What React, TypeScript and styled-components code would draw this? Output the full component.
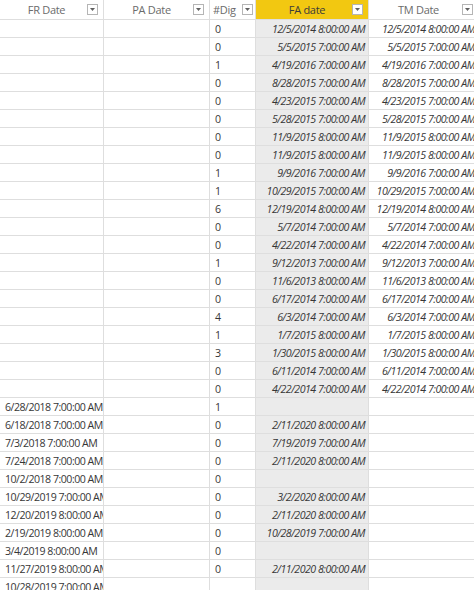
import React from "react";
import styled, { createGlobalStyle } from "styled-components";

const Global = createGlobalStyle`
  html, body { margin: 0; padding: 0; background: #ffffff; overflow: hidden; }
  body { font-family: "Segoe UI", "Open Sans", "Noto Sans", sans-serif; }
`;

const COLS = "104px 106px 46px 113px 110px";

const Table = styled.div`
  display: grid;
  grid-template-columns: ${COLS};
  grid-auto-rows: 18px;
  grid-template-rows: 20px;
  width: 474px;
  overflow: hidden;
  font-size: 10.6px;
  letter-spacing: -0.5px;
  color: #363636;
`;

const HeaderCell = styled.div<{ $active?: boolean; $tight?: boolean }>`
  display: flex;
  align-items: center;
  padding: ${(p) => (p.$tight ? "0 2px 0 3px" : "0 5px 0 6px")};
  background: ${(p) => (p.$active ? "#F2C811" : "#ffffff")};
  border-right: 1px solid #dedede;
  border-bottom: 1px solid #dedede;
  color: ${(p) => (p.$active ? "#3b3b3b" : "#6b6b6b")};
  font-size: 11px;
  letter-spacing: -0.3px;
  overflow: hidden;
  white-space: nowrap;
`;

const HeaderLabel = styled.span<{ $align?: "left" | "center" }>`
  flex: 1;
  text-align: ${(p) => p.$align || "center"};
  overflow: hidden;
`;

const DropBox = styled.span`
  flex: 0 0 auto;
  width: 9px;
  height: 9px;
  border: 1px solid #b5b5b5;
  background: #ffffff;
  display: flex;
  align-items: center;
  justify-content: center;
`;

const Cell = styled.div<{ $shade?: boolean; $right?: boolean; $italic?: boolean }>`
  display: flex;
  align-items: center;
  justify-content: ${(p) => (p.$right ? "flex-end" : "flex-start")};
  padding: ${(p) => (p.$right ? "0 3px 0 2px" : "0 2px 0 5px")};
  background: ${(p) => (p.$shade ? "#ebebeb" : "#ffffff")};
  border-right: 1px solid #dedede;
  border-bottom: 1px solid #dedede;
  font-style: ${(p) => (p.$italic ? "italic" : "normal")};
  white-space: nowrap;
  overflow: hidden;
`;

const Arrow = () => (
  <svg width="5" height="3" viewBox="0 0 5 3">
    <path d="M0 0 H5 L2.5 3 Z" fill="#606060" />
  </svg>
);

type Row = { fr: string; dig: string; fa: string; tm: string };

const top: [string, string][] = [
  ["0", "12/5/2014 8:00:00 AM"],
  ["0", "5/5/2015 7:00:00 AM"],
  ["1", "4/19/2016 7:00:00 AM"],
  ["0", "8/28/2015 7:00:00 AM"],
  ["0", "4/23/2015 7:00:00 AM"],
  ["0", "5/28/2015 7:00:00 AM"],
  ["0", "11/9/2015 8:00:00 AM"],
  ["0", "11/9/2015 8:00:00 AM"],
  ["1", "9/9/2016 7:00:00 AM"],
  ["1", "10/29/2015 7:00:00 AM"],
  ["6", "12/19/2014 8:00:00 AM"],
  ["0", "5/7/2014 7:00:00 AM"],
  ["0", "4/22/2014 7:00:00 AM"],
  ["1", "9/12/2013 7:00:00 AM"],
  ["0", "11/6/2013 8:00:00 AM"],
  ["0", "6/17/2014 7:00:00 AM"],
  ["4", "6/3/2014 7:00:00 AM"],
  ["1", "1/7/2015 8:00:00 AM"],
  ["3", "1/30/2015 8:00:00 AM"],
  ["0", "6/11/2014 7:00:00 AM"],
  ["0", "4/22/2014 7:00:00 AM"],
];

const bottom: Row[] = [
  { fr: "6/28/2018 7:00:00 AM", dig: "1", fa: "", tm: "" },
  { fr: "6/18/2018 7:00:00 AM", dig: "0", fa: "2/11/2020 8:00:00 AM", tm: "" },
  { fr: "7/3/2018 7:00:00 AM", dig: "0", fa: "7/19/2019 7:00:00 AM", tm: "" },
  { fr: "7/24/2018 7:00:00 AM", dig: "0", fa: "2/11/2020 8:00:00 AM", tm: "" },
  { fr: "10/2/2018 7:00:00 AM", dig: "0", fa: "", tm: "" },
  { fr: "10/29/2019 7:00:00 AM", dig: "0", fa: "3/2/2020 8:00:00 AM", tm: "" },
  { fr: "12/20/2019 8:00:00 AM", dig: "0", fa: "2/11/2020 8:00:00 AM", tm: "" },
  { fr: "2/19/2019 8:00:00 AM", dig: "0", fa: "10/28/2019 7:00:00 AM", tm: "" },
  { fr: "3/4/2019 8:00:00 AM", dig: "0", fa: "", tm: "" },
  { fr: "11/27/2019 8:00:00 AM", dig: "0", fa: "2/11/2020 8:00:00 AM", tm: "" },
  { fr: "10/28/2019 7:00:00 AM", dig: "", fa: "", tm: "" },
];

const rows: Row[] = [
  ...top.map(([dig, d]) => ({ fr: "", dig, fa: d, tm: d })),
  ...bottom,
];

const headers = [
  { label: "FR Date" },
  { label: "PA Date" },
  { label: "#Dig", align: "left" as const, tight: true },
  { label: "FA date", active: true },
  { label: "TM Date" },
];

export default function App() {
  return (
    <>
      <Global />
      <Table>
        {headers.map((h) => (
          <HeaderCell key={h.label} $active={h.active} $tight={h.tight}>
            <HeaderLabel $align={h.align}>{h.label}</HeaderLabel>
            <DropBox>
              <Arrow />
            </DropBox>
          </HeaderCell>
        ))}
        {rows.map((r, i) => (
          <React.Fragment key={i}>
            <Cell>{r.fr}</Cell>
            <Cell />
            <Cell>{r.dig}</Cell>
            <Cell $shade $right $italic>
              {r.fa}
            </Cell>
            <Cell $right $italic>
              {r.tm}
            </Cell>
          </React.Fragment>
        ))}
      </Table>
    </>
  );
}
